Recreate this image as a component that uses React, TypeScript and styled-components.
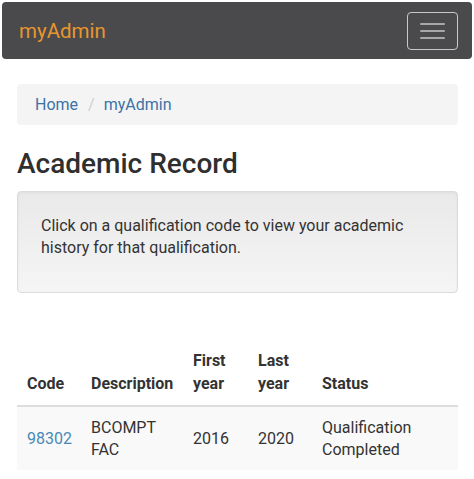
import React from "react";
import styled, { createGlobalStyle } from "styled-components";

const Global = createGlobalStyle`
  html, body { margin: 0; padding: 0; background: #fff; }
  body { font-family: Roboto, "Noto Sans", Arial, sans-serif; color: #333; font-size: 16px; line-height: 22px; }
  * { box-sizing: border-box; }
`;

const Page = styled.div`
  padding: 2px 2px 0 2px;
`;

const Navbar = styled.nav`
  height: 57px;
  background: #4a4a4c;
  border-radius: 4px;
  display: flex;
  align-items: center;
  justify-content: space-between;
  padding: 0 14px 0 17px;
`;

const Brand = styled.a`
  color: #e8962c;
  font-size: 20.5px;
  text-decoration: none;
`;

const Toggle = styled.button`
  width: 51px;
  height: 38px;
  border: 1px solid #c8c8c8;
  border-radius: 4px;
  background: transparent;
  display: flex;
  flex-direction: column;
  justify-content: center;
  align-items: center;
  gap: 5px;
  padding: 0;
`;

const Bar = styled.span`
  display: block;
  width: 25px;
  height: 2px;
  background: #a8a8a8;
  border-radius: 1px;
`;

const Container = styled.div`
  padding: 0 14px 0 15px;
`;

const Breadcrumb = styled.ol`
  list-style: none;
  margin: 25px 0 0;
  padding: 8px 18px;
  height: 41px;
  background: #f4f4f4;
  border-radius: 4px;
  display: flex;
  align-items: center;
  font-size: 16px;
`;

const Crumb = styled.li`
  color: #3b73a6;
  & + &::before {
    content: "/";
    color: #cfcfcf;
    padding: 0 9px 0 10px;
  }
`;

const Title = styled.h1`
  margin: 22px 0 0;
  font-size: 28px;
  font-weight: 500;
  line-height: 34px;
  color: #2f2f2f;
`;

const Well = styled.div`
  margin-top: 10px;
  min-height: 102px;
  padding: 23px 23px 20px;
  background: linear-gradient(#e9e9e9, #f5f5f5);
  border: 1px solid #dcdcdc;
  border-radius: 4px;
  box-shadow: inset 0 1px 3px rgba(0, 0, 0, 0.05);
  font-size: 16px;
  line-height: 22px;
  color: #333;
`;

const Table = styled.table`
  margin-top: 48px;
  width: 100%;
  border-collapse: collapse;
  table-layout: fixed;
  font-size: 16px;
`;

const Th = styled.th<{ $w?: number }>`
  width: ${(p) => (p.$w ? `${p.$w}px` : "auto")};
  text-align: left;
  vertical-align: bottom;
  font-weight: 700;
  line-height: 23px;
  padding: 8px 10px 10px;
  border-bottom: 2px solid #dddddd;
  color: #333;
`;

const Row = styled.tr`
  background: #f9f9f9;
`;

const Td = styled.td`
  vertical-align: middle;
  line-height: 22px;
  padding: 10px 10px 9px;
  color: #333;
`;

const CodeLink = styled.a`
  color: #4a88b6;
  text-decoration: none;
`;

export default function App() {
  return (
    <Page>
      <Global />
      <Navbar>
        <Brand href="#">myAdmin</Brand>
        <Toggle aria-label="Toggle navigation">
          <Bar />
          <Bar />
          <Bar />
        </Toggle>
      </Navbar>
      <Container>
        <Breadcrumb>
          <Crumb>Home</Crumb>
          <Crumb>myAdmin</Crumb>
        </Breadcrumb>
        <Title>Academic Record</Title>
        <Well>
          Click on a qualification code to view your academic history for that
          qualification.
        </Well>
        <Table>
          <thead>
            <tr>
              <Th $w={64}>Code</Th>
              <Th $w={102}>Description</Th>
              <Th $w={65}>First year</Th>
              <Th $w={64}>Last year</Th>
              <Th>Status</Th>
            </tr>
          </thead>
          <tbody>
            <Row>
              <Td>
                <CodeLink href="#">98302</CodeLink>
              </Td>
              <Td>BCOMPT FAC</Td>
              <Td>2016</Td>
              <Td>2020</Td>
              <Td>Qualification Completed</Td>
            </Row>
          </tbody>
        </Table>
      </Container>
    </Page>
  );
}
